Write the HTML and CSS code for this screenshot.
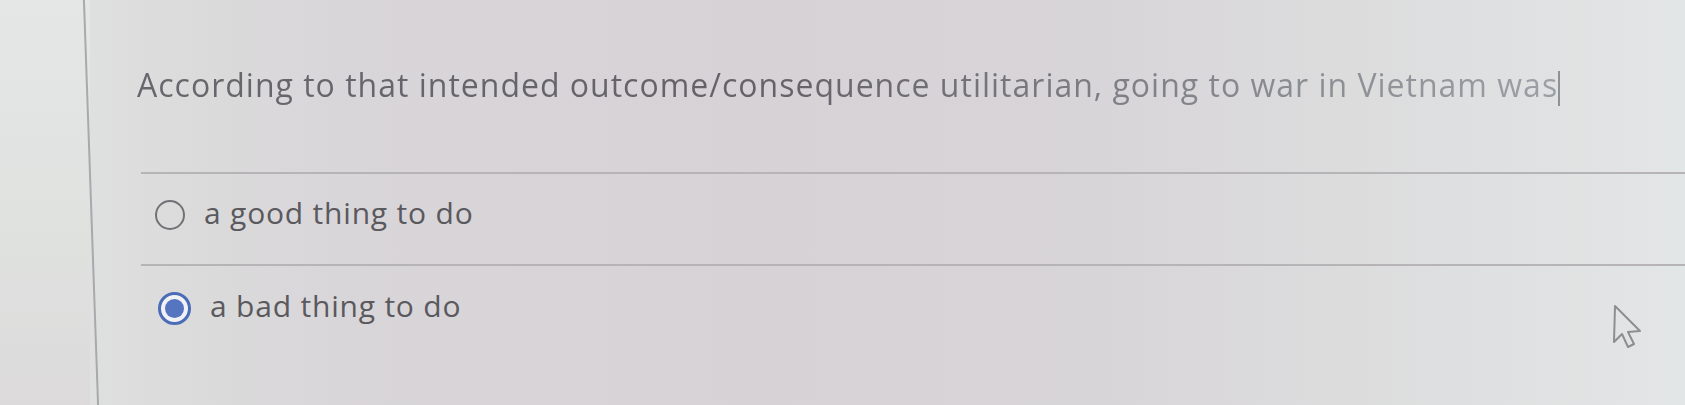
FILE: index.html
```html
<!DOCTYPE html>
<html lang="en">
<head>
<meta charset="utf-8">
<title>Question</title>
<link rel="stylesheet" href="styles.css">
</head>
<body>
<div class="page">
  <div class="sidebar"></div>
  <div class="divider"></div>
  <main class="main">
    <p class="question"><span class="qtext">According to that intended outcome/consequence utilitarian, going to war in Vietnam was</span><span class="caret"></span></p>
    <div class="options">
      <label class="option option-first">
        <span class="radio"></span>
        <span class="label">a good thing to do</span>
      </label>
      <label class="option option-second">
        <span class="radio radio-checked"><span class="dot"></span></span>
        <span class="label">a bad thing to do</span>
      </label>
    </div>
  </main>
  <svg class="pointer" width="32" height="44" viewBox="0 0 32 44" aria-hidden="true">
    <path d="M4 2 L3 38 L11 30 L17 43 L23 40 L17 28 L29 27 Z" fill="none" stroke="#8e8e90" stroke-width="2" stroke-linejoin="round"/>
  </svg>
</div>
</body>
</html>
```
FILE: styles.css
```css
html, body {
  margin: 0;
  padding: 0;
}
body {
  width: 1685px;
  height: 405px;
  overflow: hidden;
  font-family: "Open Sans", "Liberation Sans", sans-serif;
  background: linear-gradient(90deg, #e3e6e5 0%, #dcdddc 8%, #d9d6d9 20%, #d6d2d6 45%, #d8d5d8 65%, #dcdcdd 80%, #e3e6e6 100%);
}
.page {
  position: relative;
  display: flex;
  height: 405px;
}
.sidebar {
  width: 90px;
  flex: none;
  background: linear-gradient(180deg, #e4e7e6 0%, #dfe1df 60%, #dcdadb 100%);
}
.divider {
  width: 2px;
  flex: none;
  background: #a9a9ac;
  transform: skewX(2deg);
}
.main {
  flex: 1;
  padding-left: 45px;
  display: flex;
  flex-direction: column;
}
.question {
  margin: 65px 0 0 0;
  font-size: 32px;
  font-weight: 500;
  letter-spacing: 1px;
  line-height: 40px;
  height: 40px;
  white-space: nowrap;
  display: flex;
  align-items: center;
}
.qtext {
  background: linear-gradient(90deg, #66676c 0%, #646268 45%, #7f8085 70%, #9aa0a4 100%);
  -webkit-background-clip: text;
  background-clip: text;
  color: transparent;
}
.caret {
  display: inline-block;
  width: 2px;
  height: 35px;
  background: #8c9296;
  margin-left: 0;
  margin-top: 6px;
}
.options {
  margin-top: 67px;
  border-top: 2px solid #b6b4b7;
  margin-left: 4px;
}
.option {
  display: flex;
  align-items: center;
  height: 92px;
  box-sizing: border-box;
  padding-bottom: 14px;
  font-size: 30px;
  font-weight: 500;
  letter-spacing: 0.8px;
  color: #5a595e;
}
.option-first {
  border-bottom: 2px solid #b6b4b7;
  padding-left: 14px;
}
.option-second {
  padding-left: 17px;
}
.radio {
  width: 26px;
  height: 26px;
  border: 2.5px solid #727175;
  border-radius: 50%;
  flex: none;
  margin-right: 19px;
  margin-top: 6px;
  display: flex;
  align-items: center;
  justify-content: center;
}
.radio-checked {
  width: 27px;
  height: 27px;
  border: 3px solid #4b6cb6;
  background: #f1f2f6;
}
.dot {
  width: 19px;
  height: 19px;
  border-radius: 50%;
  background: #5675c0;
}
.pointer {
  position: absolute;
  left: 1611px;
  top: 304px;
}
```
